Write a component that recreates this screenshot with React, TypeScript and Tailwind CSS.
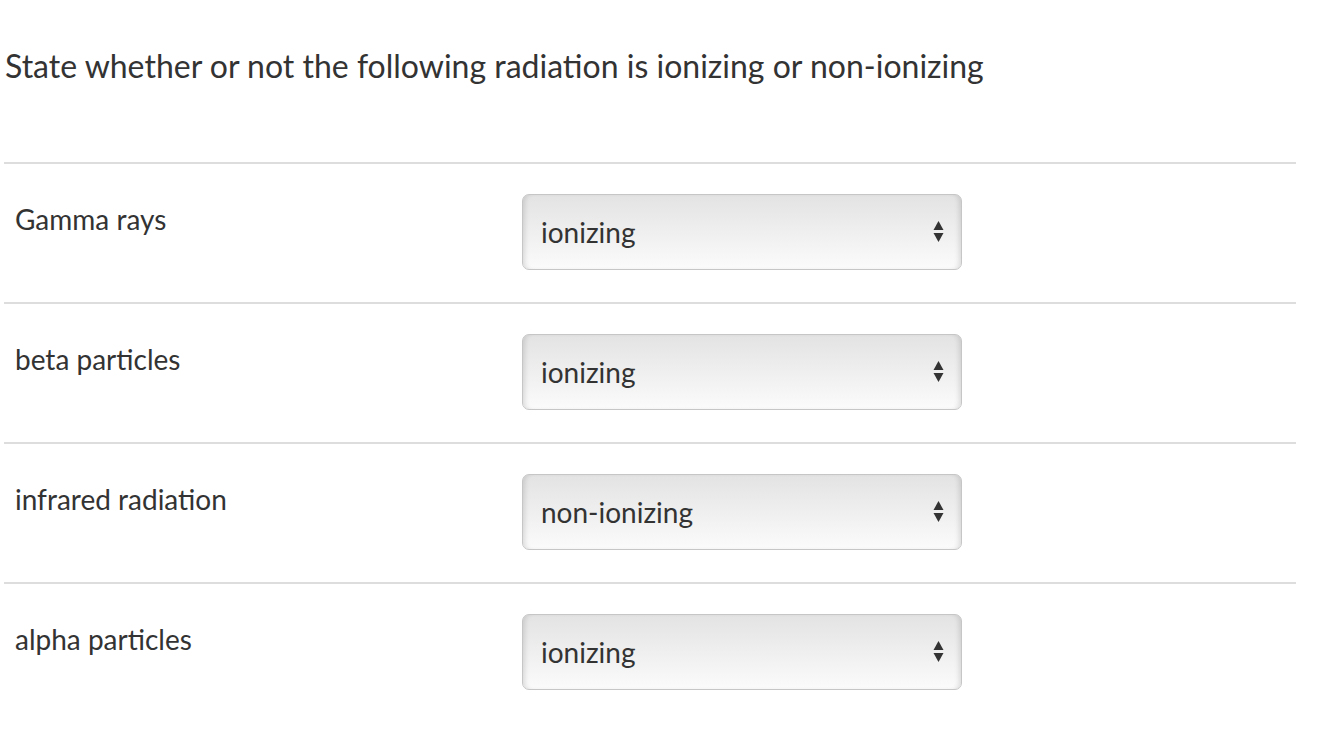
import React from 'react';

const rows = [
  { label: 'Gamma rays', value: 'ionizing' },
  { label: 'beta particles', value: 'ionizing' },
  { label: 'infrared radiation', value: 'non-ionizing' },
  { label: 'alpha particles', value: 'ionizing' },
];

function SelectBox({ value }: { value: string }) {
  return (
    <div className="flex h-[76px] w-[440px] items-center justify-between rounded-[7px] border border-[#c6c6c6] bg-gradient-to-b from-[#e3e3e3] to-[#fbfbfb] pl-[18px] pr-[17px] shadow-[inset_5px_0_5px_-3px_rgba(0,0,0,0.12),inset_-5px_0_5px_-3px_rgba(0,0,0,0.12)]">
      <span className="text-[28px] leading-[34px] text-[#333]">{value}</span>
      <svg width="11" height="24" viewBox="0 0 11 24" className="text-[#333]">
        <polygon points="5.5,1 10.5,10 0.5,10" fill="currentColor" />
        <polygon points="0.5,13 10.5,13 5.5,22" fill="currentColor" />
      </svg>
    </div>
  );
}

export default function App() {
  return (
    <div className="min-h-[746px] bg-white pl-[4px] pr-[28px] pt-[43px] font-['Lato',sans-serif] text-[#333]">
      <h1 className="pl-[1px] text-[32px] font-normal leading-[46px]">
        State whether or not the following radiation is ionizing or non-ionizing
      </h1>
      <div className="mt-[73px]">
        {rows.map((row) => (
          <div key={row.label} className="flex h-[140px] border-t-2 border-[#dddddd]">
            <div className="w-[518px] pl-[11px] pt-[37px] text-[28px] leading-[36px]">{row.label}</div>
            <div className="pt-[30px]">
              <SelectBox value={row.value} />
            </div>
          </div>
        ))}
      </div>
    </div>
  );
}
